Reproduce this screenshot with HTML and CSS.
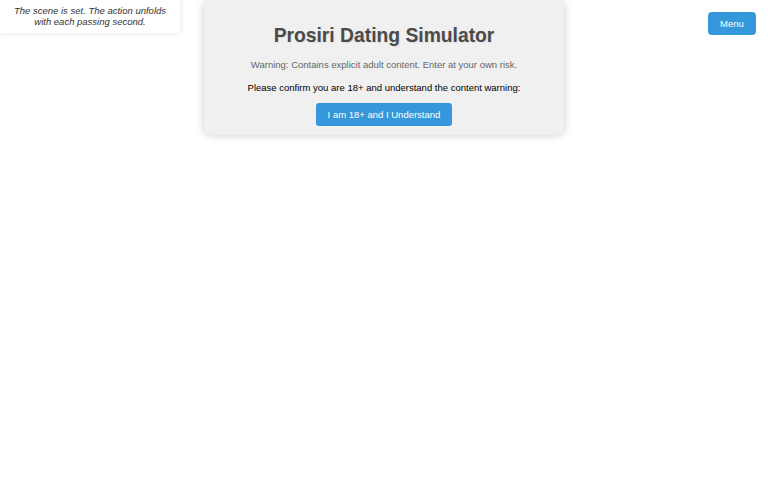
FILE: index.html
```html
<!DOCTYPE html>
<html lang="en">
<head>
    <meta charset="UTF-8">
    <meta name="viewport" content="width=device-width, initial-scale=1.0">
    <title>Prosiri Dating Simulator</title>
    <link rel="stylesheet" href="styles.css">
</head>
<body>
    <!-- scene caption -->
    <div class="scene-box">
        <p class="scene-text">The scene is set. The action unfolds with each passing second.</p>
    </div>

    <button class="menu-btn">Menu</button>

    <!-- age gate -->
    <div class="age-gate">
        <h1 class="title">Prosiri Dating Simulator</h1>
        <p class="warning">Warning: Contains explicit adult content. Enter at your own risk.</p>
        <p class="confirm">Please confirm you are 18+ and understand the content warning:</p>
        <button class="enter-btn">I am 18+ and I Understand</button>
    </div>
</body>
</html>
```

FILE: styles.css
```css
body {
    margin: 0;
    font-family: "Liberation Sans", Arial, sans-serif;
    background: #fff;
    width: 768px;
    height: 480px;
    position: relative;
    overflow: hidden;
}
.scene-box {
    position: absolute;
    top: 0;
    left: 0;
    width: 180px;
    height: 33px;
    box-sizing: border-box;
    background: #fff;
    box-shadow: 0 0 6px rgba(0,0,0,0.12);
    display: flex;
    align-items: center;
    justify-content: center;
    padding: 0 12px 1px;
}
.scene-text {
    margin: 0;
    font-size: 9.5px;
    font-style: italic;
    color: #333;
    text-align: center;
    line-height: 11px;
}
.menu-btn {
    position: absolute;
    top: 12px;
    right: 12px;
    width: 48px;
    height: 23px;
    background: #3498db;
    color: #fff;
    border: none;
    border-radius: 4px;
    font-family: inherit;
    font-size: 9.5px;
    padding: 0;
}
.age-gate {
    position: absolute;
    top: 0;
    left: 204px;
    width: 360px;
    height: 135px;
    box-sizing: border-box;
    background: #f0f0f0;
    border-radius: 8px;
    box-shadow: 0 0 10px rgba(0,0,0,0.2);
    text-align: center;
    padding-top: 24px;
}
.title {
    margin: 0;
    font-size: 19.3px;
    font-weight: bold;
    color: #4a4a4a;
    text-shadow: 1px 1px 1px rgba(0,0,0,0.08);
    line-height: 24px;
}
.warning {
    margin: 0;
    margin-top: 11px;
    font-size: 9.5px;
    color: #666;
    line-height: 12px;
}
.confirm {
    margin: 0;
    margin-top: 11px;
    font-size: 9.5px;
    color: #000;
    line-height: 12px;
}
.enter-btn {
    margin-top: 9px;
    width: 136px;
    height: 23px;
    background: #3498db;
    color: #fff;
    border: none;
    border-radius: 3px;
    font-family: inherit;
    font-size: 9.5px;
    padding: 0;
}
```
